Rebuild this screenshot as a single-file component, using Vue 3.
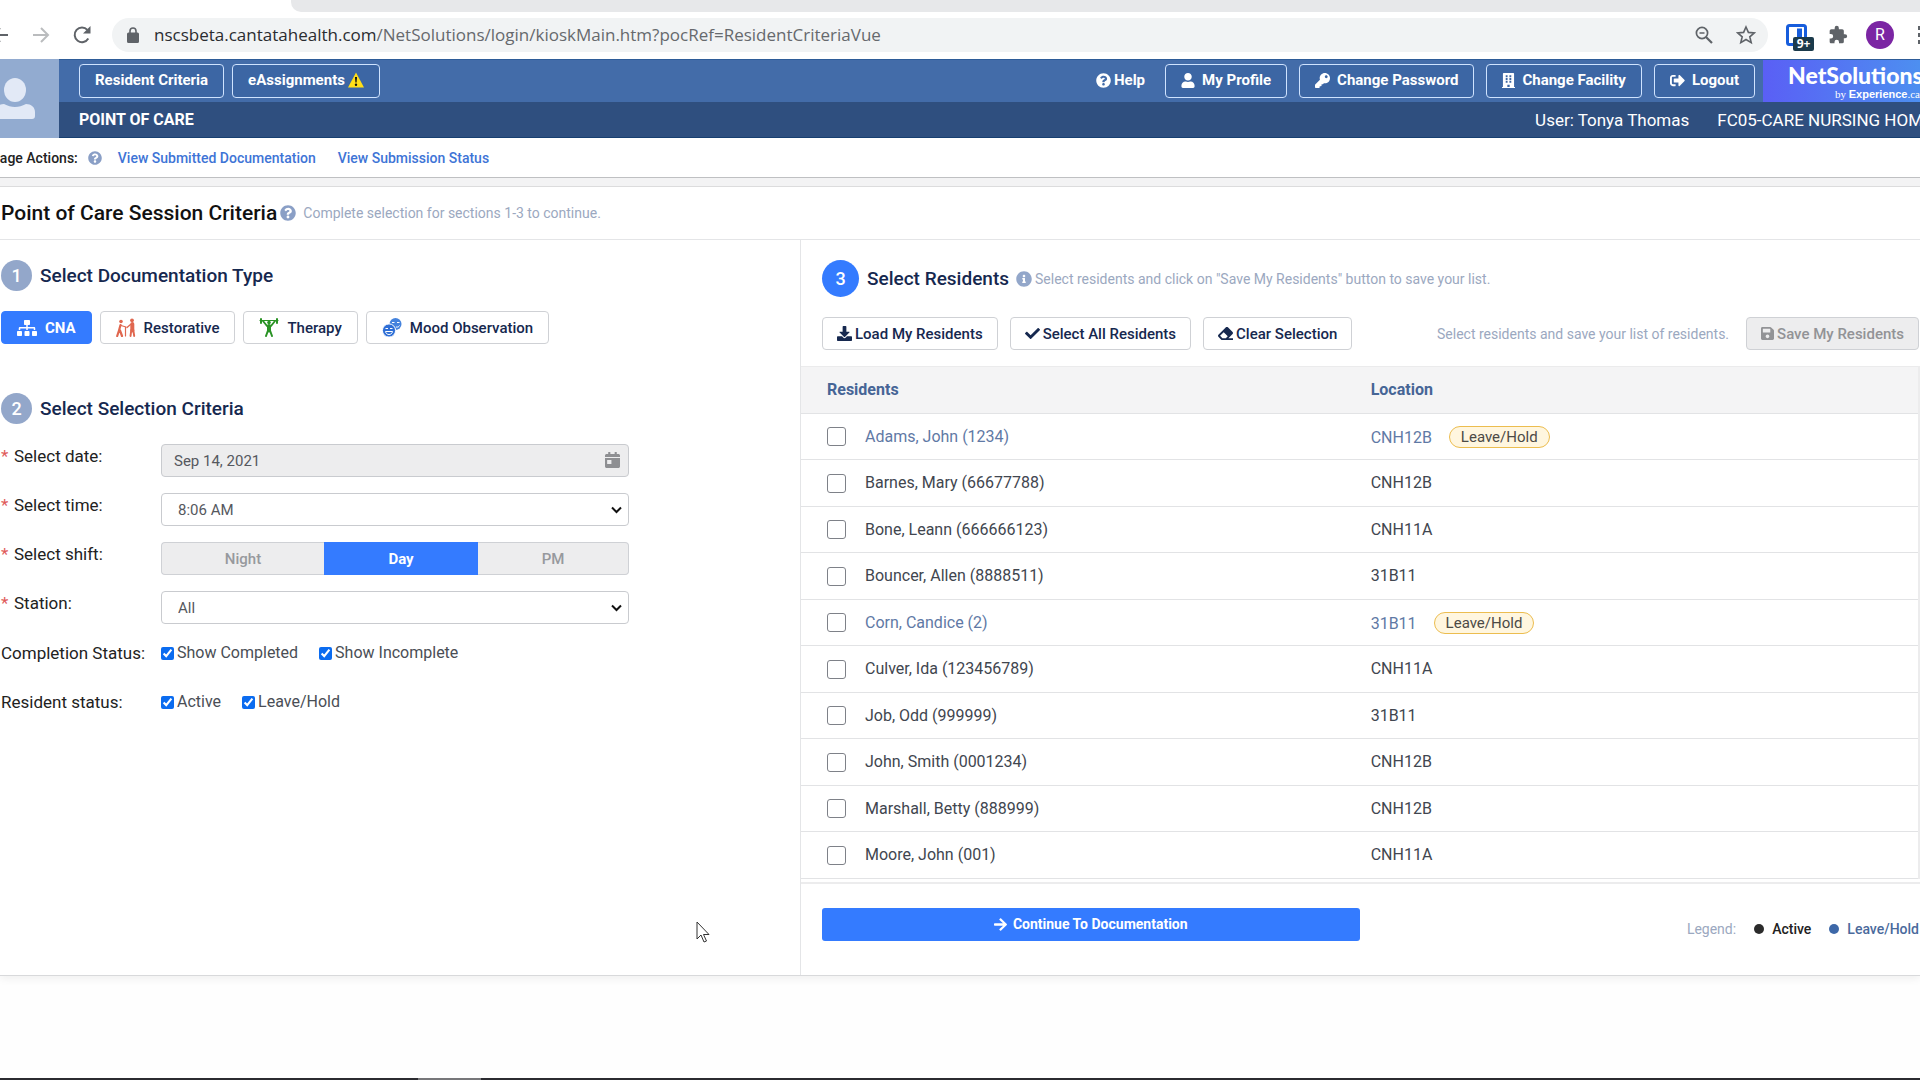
<script setup>
import { ref } from 'vue'

const icons = {
  question: ['0 0 512 512', 'M504 256c0 136.997-111.043 248-248 248S8 392.997 8 256C8 119.083 119.043 8 256 8s248 111.083 248 248zM262.655 90c-54.497 0-89.255 22.957-116.549 63.758-3.536 5.286-2.353 12.415 2.715 16.258l34.699 26.31c5.205 3.947 12.621 3.008 16.665-2.122 17.864-22.658 30.113-35.797 57.303-35.797 20.429 0 45.698 13.148 45.698 32.958 0 14.976-12.363 22.667-32.534 33.976C247.128 238.528 216 254.941 216 296v4c0 6.627 5.373 12 12 12h56c6.627 0 12-5.373 12-12v-1.333c0-28.462 83.186-29.647 83.186-106.667 0-58.002-60.165-102-116.531-102zM256 338c-25.365 0-46 20.635-46 46 0 25.364 20.635 46 46 46s46-20.636 46-46c0-25.365-20.635-46-46-46z'],
  info: ['0 0 512 512', 'M256 8C119.043 8 8 119.083 8 256c0 136.997 111.043 248 248 248s248-111.003 248-248C504 119.083 392.957 8 256 8zm0 110c23.196 0 42 18.804 42 42s-18.804 42-42 42-42-18.804-42-42 18.804-42 42-42zm56 254c0 6.627-5.373 12-12 12h-88c-6.627 0-12-5.373-12-12v-24c0-6.627 5.373-12 12-12h12v-64h-12c-6.627 0-12-5.373-12-12v-24c0-6.627 5.373-12 12-12h64c6.627 0 12 5.373 12 12v100h12c6.627 0 12 5.373 12 12v24z'],
  user: ['0 0 448 512', 'M224 256c70.7 0 128-57.3 128-128S294.7 0 224 0 96 57.3 96 128s57.3 128 128 128zm89.6 32h-16.7c-22.2 10.2-46.9 16-72.9 16s-50.6-5.8-72.9-16h-16.7C60.2 288 0 348.2 0 422.4V464c0 26.5 21.5 48 48 48h352c26.5 0 48-21.5 48-48v-41.6c0-74.2-60.2-134.4-134.4-134.4z'],
  key: ['0 0 512 512', 'M512 176.001C512 273.203 433.202 352 336 352c-11.22 0-22.19-1.062-32.827-3.069l-24.012 27.014A23.999 23.999 0 0 1 261.223 384H224v40c0 13.255-10.745 24-24 24h-40v40c0 13.255-10.745 24-24 24H24c-13.255 0-24-10.745-24-24v-78.059c0-6.365 2.529-12.47 7.029-16.971l161.802-161.802C163.108 213.814 160 195.271 160 176 160 78.798 238.797.001 335.999 0 433.488-.001 512 78.511 512 176.001zM336 128c0 26.51 21.49 48 48 48s48-21.49 48-48-21.49-48-48-48-48 21.49-48 48z'],
  building: ['0 0 448 512', 'M436 480h-20V24c0-13.255-10.745-24-24-24H56C42.745 0 32 10.745 32 24v456H12c-6.627 0-12 5.373-12 12v20h448v-20c0-6.627-5.373-12-12-12zM128 76h64v64h-64zM256 76h64v64h-64zM128 172h64v64h-64zM256 172h64v64h-64zM128 268h64v64h-64zM256 268h64v64h-64zM184 400h80v80h-80z'],
  logout: ['0 0 512 512', 'M497 273L329 441c-15 15-41 5-41-17v-96H152c-13 0-24-11-24-24v-96c0-13 11-24 24-24h136V88c0-21 26-32 41-17l168 168c9 9 9 25 0 34zM192 436v-40c0-7-5-12-12-12H96c-18 0-32-14-32-32V160c0-18 14-32 32-32h84c7 0 12-5 12-12V76c0-7-5-12-12-12H96c-53 0-96 43-96 96v192c0 53 43 96 96 96h84c7 0 12-5 12-12z'],
  sitemap: ['0 0 640 512', 'M128 352H32c-18 0-32 14-32 32v96c0 18 14 32 32 32h96c18 0 32-14 32-32v-96c0-18-14-32-32-32zm-24-80h192v48h48v-48h192v48h48v-57c0-21-17-39-39-39H344v-64h40c18 0 32-14 32-32V32c0-18-14-32-32-32H256c-18 0-32 14-32 32v96c0 18 14 32 32 32h40v64H95c-22 0-39 18-39 39v57h48v-48zm264 80h-96c-18 0-32 14-32 32v96c0 18 14 32 32 32h96c18 0 32-14 32-32v-96c0-18-14-32-32-32zm240 0h-96c-18 0-32 14-32 32v96c0 18 14 32 32 32h96c18 0 32-14 32-32v-96c0-18-14-32-32-32z'],
  download: ['0 0 512 512', 'M216 0h80c13 0 24 11 24 24v168h88c18 0 27 21 14 34L270 378c-7 7-20 7-27 0L91 226c-13-13-4-34 14-34h87V24c0-13 11-24 24-24zm296 376v112c0 13-11 24-24 24H24c-13 0-24-11-24-24V376c0-13 11-24 24-24h147l49 49c20 20 52 20 72 0l49-49h147c13 0 24 11 24 24z'],
  check: ['0 0 512 512', 'M173.898 439.404l-166.4-166.4c-9.997-9.997-9.997-26.206 0-36.204l36.203-36.204c9.997-9.998 26.207-9.998 36.204 0L192 312.69 432.095 72.596c9.997-9.997 26.207-9.997 36.204 0l36.203 36.204c9.997 9.997 9.997 26.206 0 36.204l-294.4 294.401c-9.998 9.997-26.207 9.997-36.204-.001z'],
  eraser: ['0 0 512 512', 'M497.941 273.941c18.745-18.745 18.745-49.137 0-67.882l-160-160c-18.745-18.745-49.136-18.746-67.883 0l-256 256c-18.745 18.745-18.745 49.137 0 67.882l96 96A48.004 48.004 0 0 0 144 480h356c6.627 0 12-5.373 12-12v-40c0-6.627-5.373-12-12-12H355.883l142.058-142.059zm-302.627-62.627l137.373 137.373L265.373 416H150.628l-80-80 124.686-124.686z'],
  save: ['0 0 448 512', 'M433.941 129.941l-83.882-83.882A48 48 0 0 0 316.118 32H48C21.49 32 0 53.49 0 80v352c0 26.51 21.49 48 48 48h352c26.51 0 48-21.49 48-48V163.882a48 48 0 0 0-14.059-33.941zM224 416c-35.346 0-64-28.654-64-64 0-35.346 28.654-64 64-64s64 28.654 64 64c0 35.346-28.654 64-64 64zm96-304.52V212c0 6.627-5.373 12-12 12H76c-6.627 0-12-5.373-12-12V108c0-6.627 5.373-12 12-12h228.52c3.183 0 6.235 1.264 8.485 3.515l3.48 3.48A11.996 11.996 0 0 1 320 111.48z'],
  arrow: ['0 0 448 512', 'M190 101l22-22c10-10 25-10 34 0l195 194c9 9 9 25 0 34L246 501c-9 9-24 9-34 0l-22-22c-10-10-9-25 0-35l121-114H24c-13 0-24-11-24-24v-32c0-13 11-24 24-24h287L190 136c-10-10-10-25 0-35z'],
  calendar: ['0 0 448 512', 'M0 192h448v272c0 26-22 48-48 48H48c-26 0-48-22-48-48V192zm64 74v108c0 6 4 10 10 10h108c6 0 10-4 10-10V266c0-6-4-10-10-10H74c-6 0-10 4-10 10zM400 64h-48V12c0-7-5-12-12-12h-40c-7 0-12 5-12 12v52H160V12c0-7-5-12-12-12h-40c-7 0-12 5-12 12v52H48C22 64 0 86 0 112v48h448v-48c0-26-22-48-48-48z'],
}

const residents = [
  { name: 'Adams, John (1234)', location: 'CNH12B', leave: true },
  { name: 'Barnes, Mary (66677788)', location: 'CNH12B' },
  { name: 'Bone, Leann (666666123)', location: 'CNH11A' },
  { name: 'Bouncer, Allen (8888511)', location: '31B11' },
  { name: 'Corn, Candice (2)', location: '31B11', leave: true },
  { name: 'Culver, Ida (123456789)', location: 'CNH11A' },
  { name: 'Job, Odd (999999)', location: '31B11' },
  { name: 'John, Smith (0001234)', location: 'CNH12B' },
  { name: 'Marshall, Betty (888999)', location: 'CNH12B' },
  { name: 'Moore, John (001)', location: 'CNH11A' },
]

const selected = ref([])
const shift = ref('Day')
const shifts = ['Night', 'Day', 'PM']
const showCompleted = ref(true)
const showIncomplete = ref(true)
const showActive = ref(true)
const showLeave = ref(true)
</script>

<template>
  <div class="window">
    <header class="browser">
      <div class="tabstrip"></div>
      <div class="toolbar">
        <button class="tool back" aria-label="Back">
          <svg width="18" height="18" viewBox="0 0 18 18" fill="none" stroke="#5f6368" stroke-width="2"><path d="M17 9H2M9 2L2 9l7 7" /></svg>
        </button>
        <button class="tool forward" aria-label="Forward">
          <svg width="18" height="18" viewBox="0 0 18 18" fill="none" stroke="#babcbe" stroke-width="2"><path d="M1 9h15M9 2l7 7-7 7" /></svg>
        </button>
        <button class="tool reload" aria-label="Reload">
          <svg width="20" height="20" viewBox="0 0 20 20"><path d="M16.3 13.5A7.3 7.3 0 1 1 15.400 4.900" fill="none" stroke="#5f6368" stroke-width="2" /><path d="M18.500 1v7.500H11z" fill="#5f6368" /></svg>
        </button>
        <div class="address">
          <svg width="12" height="16" viewBox="0 0 12 16"><path d="M1.500 5.500h9A1.500 1.500 0 0 1 12 7v7.500a1.500 1.500 0 0 1-1.500 1.500h-9A1.500 1.500 0 0 1 0 14.500V7a1.500 1.500 0 0 1 1.500-1.500z" fill="#5f6368" /><path d="M3 6V4a3 3 0 0 1 6 0v2" fill="none" stroke="#5f6368" stroke-width="1.600" /></svg>
          <span class="url">nscsbeta.cantatahealth.com<span class="path">/NetSolutions/login/kioskMain.htm?pocRef=ResidentCriteriaVue</span></span>
          <svg width="18" height="18" viewBox="0 0 18 18" fill="none" stroke="#5f6368"><circle cx="7" cy="7" r="5.600" stroke-width="1.700" /><path d="M11 11l6 6" stroke-width="2.200" /><path d="M4.500 7h5" stroke-width="1.500" /></svg>
          <svg class="star" width="20" height="20" viewBox="0 0 20 20" fill="none" stroke="#5f6368" stroke-width="1.600"><path d="M10 2l2.400 5.400 5.900.5-4.500 3.900 1.400 5.800-5.200-3.100-5.200 3.100 1.400-5.800L1.700 7.900l5.900-.5z" /></svg>
        </div>
        <div class="extensions">
          <div class="bitwarden">
            <svg width="22" height="22" viewBox="0 0 22 22"><rect x="1.500" y="1.500" width="18" height="19" rx="2" fill="#fff" stroke="#175ddc" stroke-width="3" /><path d="M11 4.500h5V13l-5 3z" fill="#175ddc" /></svg>
            <span class="count">9+</span>
          </div>
          <svg width="20" height="20" viewBox="0 0 24 24" fill="#5f6368"><path d="M20.500 11H19V7a2 2 0 0 0-2-2h-4V3.500a2.500 2.500 0 0 0-5 0V5H4a2 2 0 0 0-2 2v3.800h1.500a2.700 2.700 0 0 1 0 5.400H2V20c0 1.100.9 2 2 2h3.800v-1.500a2.700 2.700 0 0 1 5.400 0V22H17a2 2 0 0 0 2-2v-4h1.500a2.500 2.500 0 0 0 0-5z" /></svg>
          <span class="profile">R</span>
          <svg width="4" height="20" viewBox="0 0 4 20" fill="#5f6368"><rect y="1" width="4" height="4" /><rect y="8" width="4" height="4" /><rect y="15" width="4" height="4" /></svg>
        </div>
      </div>
    </header>

    <div class="masthead">
      <div class="avatar">
        <svg width="40" height="42" viewBox="0 0 40 42" fill="#e2e9f6"><ellipse cx="20" cy="12" rx="11" ry="12" /><path d="M0 40V34c0-5 4-8 9-8 4 2 7 3 11 3s7-1 11-3c5 0 9 3 9 8v4a3 3 0 0 1-3 3H2z" /></svg>
      </div>
      <div class="bars">
        <nav class="topbar">
          <button class="navbtn">Resident Criteria</button>
          <button class="navbtn">eAssignments
            <svg width="16" height="16" viewBox="0 0 16 16"><path d="M8 0.500L16 15.500H0z" fill="#ffde17" /><path d="M7 5h2l-.4 5.500H7.400z" fill="#111" /><circle cx="8" cy="12.800" r="1.200" fill="#111" /></svg>
          </button>
          <a class="help" href="#"><svg width="15" height="15" :viewBox="icons.question[0]"><path :d="icons.question[1]" /></svg>Help</a>
          <button class="navbtn wide"><svg width="14" height="15" :viewBox="icons.user[0]"><path :d="icons.user[1]" /></svg>My Profile</button>
          <button class="navbtn wide"><svg width="15" height="15" :viewBox="icons.key[0]"><path :d="icons.key[1]" /></svg>Change Password</button>
          <button class="navbtn wide"><svg width="13" height="15" :viewBox="icons.building[0]"><path fill-rule="evenodd" :d="icons.building[1]" /></svg>Change Facility</button>
          <button class="navbtn wide"><svg width="15" height="15" :viewBox="icons.logout[0]"><path :d="icons.logout[1]" /></svg>Logout</button>
          <div class="brand">
            <span class="product">NetSolutions</span>
            <span class="maker">by <b>Experience</b>.care</span>
          </div>
        </nav>
        <div class="subbar">
          <h1>POINT OF CARE</h1>
          <span>User: Tonya Thomas</span>
          <span class="facility">FC05-CARE NURSING HOM</span>
        </div>
      </div>
    </div>

    <div class="actions">
      <span>Page Actions:</span>
      <svg width="14" height="14" :viewBox="icons.question[0]"><path :d="icons.question[1]" /></svg>
      <a href="#">View Submitted Documentation</a>
      <a href="#">View Submission Status</a>
    </div>

    <main class="card">
      <div class="cardhead">
        <h2>Point of Care Session Criteria</h2>
        <svg width="16" height="16" :viewBox="icons.question[0]"><path :d="icons.question[1]" /></svg>
        <span class="hint">Complete selection for sections 1-3 to continue.</span>
      </div>

      <div class="columns">
        <section class="criteria">
          <div class="step"><span class="num">1</span><h3>Select Documentation Type</h3></div>
          <div class="types">
            <button class="type on"><svg width="20" height="16" :viewBox="icons.sitemap[0]"><path :d="icons.sitemap[1]" /></svg>CNA</button>
            <button class="type">
              <svg width="20" height="19" viewBox="0 0 20 19" fill="none" stroke="#e0674f" stroke-linecap="round"><circle cx="5" cy="3.500" r="1.800" fill="#e0674f" stroke="none" /><path d="M4.500 7L3 12.500M3 12.500L1.200 18M4 12.500l2 5.500" stroke-width="2.200" /><path d="M5 7.500l5 1.500M9.500 9v9" stroke-width="1.200" /><circle cx="16" cy="2.300" r="1.900" fill="#e0674f" stroke="none" /><path d="M16.300 6v6.500" stroke-width="4" /><path d="M15.300 12l-.8 6M17.300 12l.9 6" stroke-width="1.900" /><path d="M14.500 6.500L11 9.500" stroke-width="1.300" /></svg>
              Restorative
            </button>
            <button class="type">
              <svg width="20" height="19" viewBox="0 0 20 19" fill="none" stroke="#2a9325" stroke-linecap="round"><path d="M1 2.500h18" stroke-width="1.200" /><path d="M2 1v4M18 1v4" stroke-width="2" /><circle cx="10" cy="4.500" r="1.800" fill="#2a9325" stroke="none" /><path d="M4 3l4 5M16 3l-4 5" stroke-width="1.900" /><path d="M10 8v4.500" stroke-width="4" /><path d="M9 12.500l-2 5.500M11 12.500l2 5.500" stroke-width="2" /></svg>
              Therapy
            </button>
            <button class="type">
              <svg width="20" height="19" viewBox="0 0 20 19" fill="none" stroke="#fff" stroke-width="1"><circle cx="13.500" cy="6" r="6" fill="#4583dd" stroke="none" /><path d="M10 4.500h2.500M15 4.500h2.500M14 9c2 .5 3-.5 3.500-1.500" /><circle cx="7" cy="12.500" r="6.600" fill="#2f6fd6" /><path d="M3.500 10.500H6M8 10.500h2.500M3.500 13.500h7c-.5 4-6.500 4-7 0z" /></svg>
              Mood Observation
            </button>
          </div>

          <div class="step"><span class="num">2</span><h3>Select Selection Criteria</h3></div>
          <form class="form" @submit.prevent>
            <div class="row">
              <label class="req" for="date">Select date:</label>
              <div class="datebox">
                <input id="date" class="control" type="text" value="Sep 14, 2021" disabled />
                <svg width="15" height="16" :viewBox="icons.calendar[0]" preserveAspectRatio="none"><path fill-rule="evenodd" :d="icons.calendar[1]" /></svg>
              </div>
            </div>
            <div class="row">
              <label class="req" for="time">Select time:</label>
              <div class="selectbox">
                <select id="time" class="control"><option>8:06 AM</option></select>
                <svg width="11" height="8" viewBox="0 0 11 8"><path d="M1 1.500l4.500 4.500L10 1.500" /></svg>
              </div>
            </div>
            <div class="row">
              <span id="shift" class="req">Select shift:</span>
              <div class="shifts" role="group" aria-labelledby="shift">
                <button v-for="s in shifts" :key="s" type="button" :class="{ on: shift === s }" @click="shift = s">{{ s }}</button>
              </div>
            </div>
            <div class="row">
              <label class="req" for="station">Station:</label>
              <div class="selectbox">
                <select id="station" class="control"><option>All</option></select>
                <svg width="11" height="8" viewBox="0 0 11 8"><path d="M1 1.500l4.500 4.500L10 1.500" /></svg>
              </div>
            </div>
            <div class="row">
              <span class="name">Completion Status:</span>
              <div class="checks">
                <label><input v-model="showCompleted" type="checkbox" />Show Completed</label>
                <label><input v-model="showIncomplete" type="checkbox" />Show Incomplete</label>
              </div>
            </div>
            <div class="row">
              <span class="name">Resident status:</span>
              <div class="checks">
                <label><input v-model="showActive" type="checkbox" />Active</label>
                <label><input v-model="showLeave" type="checkbox" />Leave/Hold</label>
              </div>
            </div>
          </form>
        </section>

        <section class="residents">
          <div class="step big">
            <span class="num on">3</span>
            <h3>Select Residents</h3>
            <svg width="16" height="16" :viewBox="icons.info[0]"><path :d="icons.info[1]" /></svg>
            <span class="hint">Select residents and click on "Save My Residents" button to save your list.</span>
          </div>
          <div class="tools">
            <button class="btn"><svg width="15" height="15" :viewBox="icons.download[0]"><path :d="icons.download[1]" /></svg>Load My Residents</button>
            <button class="btn"><svg width="15" height="15" :viewBox="icons.check[0]"><path :d="icons.check[1]" /></svg>Select All Residents</button>
            <button class="btn"><svg width="15" height="15" :viewBox="icons.eraser[0]"><path :d="icons.eraser[1]" /></svg>Clear Selection</button>
            <span class="hint">Select residents and save your list of residents.</span>
            <button class="btn" disabled><svg width="13" height="15" :viewBox="icons.save[0]"><path :d="icons.save[1]" /></svg>Save My Residents</button>
          </div>
          <div class="tablewrap">
            <table>
              <thead>
                <tr><th class="who" scope="col">Residents</th><th scope="col">Location</th></tr>
              </thead>
              <tbody>
                <tr v-for="(r, i) in residents" :key="r.name" :class="{ leave: r.leave }">
                  <td class="who">
                    <label :for="'r' + i"><input :id="'r' + i" v-model="selected" type="checkbox" :value="r.name" />{{ r.name }}</label>
                  </td>
                  <td>{{ r.location }}<span v-if="r.leave" class="tag">Leave/Hold</span></td>
                </tr>
              </tbody>
            </table>
          </div>
          <footer class="foot">
            <button class="continue"><svg width="13" height="15" :viewBox="icons.arrow[0]"><path transform="translate(0 -34)" :d="icons.arrow[1]" /></svg>Continue To Documentation</button>
            <div class="legend">
              <span class="label">Legend:</span>
              <span class="dot"></span><span class="active">Active</span>
              <span class="dot blue"></span><span class="held">Leave/Hold</span>
            </div>
          </footer>
        </section>
      </div>
    </main>

    <div class="taskbar"><span></span></div>
    <svg class="cursor" width="14" height="22" viewBox="0 0 14 22"><path d="M1 1v17l4-4 3 7 2.500-1-3-6.500H13z" fill="#fff" stroke="#333" /></svg>
  </div>
</template>

<style>
body {
  margin: 0;
  overflow: hidden;
  background: #fefefe;
}
</style>

<style scoped>
.window {
  position: relative;
  display: flex;
  flex-direction: column;
  min-height: 100vh;
  overflow: hidden;
  font-family: Roboto, "Liberation Sans", sans-serif;
  font-size: 16px;
  line-height: 20px;
  color: #333a45;
}
* { box-sizing: border-box; }
button, input, select { font: inherit; color: inherit; margin: 0; }
button { cursor: pointer; white-space: nowrap; }
h1, h2, h3 { margin: 0; font-weight: 500; }
a { text-decoration: none; }
svg { flex: none; display: block; }

.browser { background: #fff; }
.tabstrip {
  height: 12px;
  margin-left: 291px;
  background: #e7e8ea;
  border-bottom-left-radius: 10px;
}
.toolbar {
  display: flex;
  align-items: center;
  height: 47px;
  padding-bottom: 1px;
}
.tool { display: block; padding: 0; border: 0; background: none; }
.back { margin-left: -9px; }
.forward { margin-left: 23px; }
.reload { margin: 0 20px 0 22px; }
.address {
  flex: 1;
  display: flex;
  align-items: center;
  height: 34px;
  padding: 0 12px 0 15px;
  border-radius: 17px;
  background: #f1f3f4;
}
.url {
  flex: 1;
  margin-left: 15px;
  font-family: "Open Sans", "Noto Sans", sans-serif;
  font-size: 17px;
  line-height: 24px;
  color: #2a2c30;
}
.path { color: #66696d; }
.star { margin-left: 23px; }
.extensions {
  display: flex;
  align-items: center;
  gap: 18px;
  margin: 0 -2px 0 18px;
}
.bitwarden { position: relative; margin-right: 2px; }
.count {
  position: absolute;
  left: 7px;
  top: 13px;
  width: 21px;
  border-radius: 2px;
  background: #1b3a4b;
  font: 700 12px/14px "Open Sans", sans-serif;
  color: #fff;
  text-align: center;
}
.profile {
  width: 28px;
  height: 28px;
  border-radius: 50%;
  background: #7b25a3;
  color: #fff;
  line-height: 28px;
  text-align: center;
}
.extensions > :last-child { margin-left: 6px; }

.masthead { display: flex; height: 79px; }
.avatar {
  display: flex;
  align-items: center;
  width: 59px;
  background: #92abd0;
}
.avatar svg { margin-left: -5px; }
.bars { flex: 1; min-width: 0; display: flex; flex-direction: column; }
.topbar {
  display: flex;
  align-items: center;
  height: 43px;
  padding-left: 20px;
  background: #436ca9;
  border-top: 1px solid #2e5c98;
}
.navbtn {
  display: flex;
  align-items: center;
  gap: 3px;
  height: 34px;
  margin-right: 8px;
  padding: 0 15px 2px;
  border: 1px solid #cfe3ff;
  border-radius: 4px;
  background: #3c66a4;
  color: #fff;
  font-size: 15px;
  font-weight: 700;
}
.navbtn.wide { gap: 7px; margin-right: 12px; fill: #fff; }
.help {
  display: flex;
  align-items: center;
  gap: 3px;
  margin: 0 20px 2px auto;
  fill: #fff;
  color: #fff;
  font-size: 15px;
  font-weight: 700;
}
.brand {
  width: 157px;
  height: 42px;
  margin-left: -4px;
  padding: 2px 0 0 25px;
  overflow: hidden;
  background: linear-gradient(90deg, #5a5ff5, #4d8ff0);
  color: #fff;
  white-space: nowrap;
}
.product {
  display: block;
  font: 900 23px/26px Lato, sans-serif;
}
.maker {
  display: block;
  padding-left: 47px;
  font: 11px/12px "Liberation Serif", serif;
}
.maker b { font-family: "Liberation Sans", sans-serif; line-height: 11px; }
.subbar {
  display: flex;
  align-items: center;
  flex: 1;
  padding-left: 20px;
  background: #2f4f7f;
  border-bottom: 1px solid #173f70;
  color: #fff;
  font-size: 17px;
  white-space: nowrap;
}
.subbar h1 { flex: 1; font-size: 16px; line-height: 20px; font-weight: 700; }
.facility { margin: 0 -3px 0 28px; }

.actions {
  display: flex;
  align-items: center;
  height: 40px;
  margin-left: -9px;
  border-bottom: 1px solid #bfc0c2;
  background: #fff;
  font-size: 14px;
  font-weight: 500;
  color: #222;
}
.actions svg { margin: 0 0 0 10px; fill: #8a9fc6; }
.actions a { margin-left: 16px; color: #3e74d6; }
.actions a + a { margin-left: 22px; }

.card {
  margin-top: 8px;
  border-top: 1px solid #dcdcdd;
  border-bottom: 1px solid #d8d9db;
  background: #fff;
  box-shadow: 0 -8px 0 #f3f3f4, 0 3px 8px rgba(0, 0, 0, 0.06);
}
.cardhead {
  display: flex;
  align-items: center;
  height: 53px;
  padding-left: 1px;
  border-bottom: 1px solid #e4e5e7;
}
.cardhead h2 { font-size: 21px; line-height: 24px; color: #111; }
.cardhead svg { margin: 0 7px 0 3px; fill: #8a9fc6; }
.hint { font-size: 14px; color: #9ba8c0; }

.columns { display: grid; grid-template-columns: 5fr 7fr; }
.criteria { padding: 20px 0 0 1px; }
.step { display: flex; align-items: center; height: 31px; }
.step h3 { margin-left: 8px; font-size: 19px; line-height: 24px; color: #16284f; }
.num {
  width: 31px;
  height: 31px;
  border-radius: 50%;
  background: #93a7ca;
  color: #fff;
  font-size: 18px;
  font-weight: 500;
  line-height: 31px;
  text-align: center;
}
.num.on { width: 37px; height: 37px; line-height: 37px; background: #347bff; }
.types { display: flex; gap: 8px; margin: 20px 0 49px; }
.type {
  display: flex;
  align-items: center;
  gap: 8px;
  height: 33px;
  padding: 0 15px;
  border: 1px solid #cfd1d5;
  border-radius: 4px;
  background: #fff;
  color: #16284f;
  font-size: 15px;
  font-weight: 500;
}
.type.on { border-color: #347bff; background: #347bff; color: #fff; fill: #fff; font-weight: 700; }

.form { margin: 20px 171px 0 0; }
.row { display: grid; grid-template-columns: 160px 1fr; height: 33px; margin-bottom: 16px; color: #222; }
.req, .name { padding-top: 2px; font-size: 17px; white-space: nowrap; }
.name { padding-top: 3px; }
.req::before { content: "*"; display: inline-block; width: 13px; color: #e05a5a; }
.control {
  display: block;
  width: 100%;
  height: 33px;
  padding: 0 12px;
  border: 1px solid #c9cbcf;
  border-radius: 4px;
  background: #fff;
  color: #55585e;
  font-size: 15px;
  appearance: none;
}
select.control { padding: 0 16px; }
.control:disabled { background: #ededee; opacity: 1; }
.datebox, .selectbox { position: relative; }
.datebox svg { position: absolute; right: 9px; top: 8px; fill: #8e8f92; }
.selectbox svg { position: absolute; right: 7px; top: 13px; fill: none; stroke: #111; stroke-width: 2; }
.shifts { display: grid; grid-template-columns: 163px 154px 1fr; }
.shifts button {
  height: 33px;
  padding: 0;
  border: 1px solid #cfd1d5;
  border-width: 1px 0;
  background: #ededee;
  color: #97999d;
  font-size: 15px;
  font-weight: 500;
}
.shifts button:first-child { border-left-width: 1px; border-radius: 4px 0 0 4px; }
.shifts button:last-child { border-right-width: 1px; border-radius: 0 4px 4px 0; }
.shifts button.on { border-color: #347bff; background: #347bff; color: #fff; font-weight: 700; }
.checks { display: flex; gap: 21px; padding-top: 3px; height: 23px; color: #4a4e55; white-space: nowrap; }
.checks label { display: flex; align-items: center; gap: 3px; }
.checks input { width: 13px; height: 13px; accent-color: #0b6cf0; }

.residents { border-left: 1px solid #e4e5e7; }
.step.big { height: 37px; margin: 20px 0 0 21px; }
.step svg { margin: 0 3px 0 7px; fill: #93a7ca; }
.tools { display: flex; align-items: center; gap: 12px; padding: 20px 1px 16px 21px; }
.btn {
  display: flex;
  align-items: center;
  gap: 3px;
  height: 33px;
  padding: 0 14px;
  border: 1px solid #cfd1d5;
  border-radius: 4px;
  background: #fff;
  color: #16284f;
  fill: #16284f;
  font-size: 15px;
  font-weight: 500;
}
.btn:disabled { background: #ededee; color: #929396; fill: #929396; }
.tools .hint { margin: 0 5px 0 auto; }
.tablewrap { border-right: 2px solid #ececed; }
table { width: 100%; table-layout: fixed; border-collapse: separate; border-spacing: 0; }
th, td { padding: 0; text-align: left; border-bottom: 1px solid #e2e3e5; }
th {
  height: 48px;
  border-top: 1px solid #ebebec;
  background: #f4f4f5;
  color: #466596;
  font-weight: 700;
}
.who { width: 51%; padding-left: 26px; }
td { height: 46px; color: #41464f; }
tr:nth-child(even) td { height: 47px; }
td label { display: flex; align-items: center; gap: 19px; }
td input {
  appearance: none;
  width: 19px;
  height: 19px;
  border: 1px solid #7e8188;
  border-radius: 3px;
  background: #fff;
}
td input:checked { background: #347bff; }
.leave td { color: #5f79a5; }
.tag {
  display: inline-block;
  margin-left: 17px;
  padding: 0 11px;
  border: 1px solid #ecbd4f;
  border-radius: 11px;
  background: #fff6df;
  color: #4c4a46;
  font-size: 15px;
  line-height: 20px;
  vertical-align: 1px;
}
.foot {
  display: flex;
  align-items: center;
  justify-content: space-between;
  height: 93px;
  margin-top: 3px;
  padding: 0 1px 11px 21px;
  border-top: 2px solid #ececed;
}
.continue {
  display: flex;
  align-items: center;
  justify-content: center;
  gap: 6px;
  width: 49%;
  height: 33px;
  border: 0;
  border-radius: 3px;
  background: #347bff;
  color: #fff;
  fill: #fff;
  font-size: 14px;
  font-weight: 700;
}
.legend { display: flex; align-items: center; padding-top: 9px; font-size: 14px; font-weight: 500; }
.label { margin-right: 18px; color: #9ba8c0; font-weight: 400; }
.dot { width: 10px; height: 10px; margin-right: 8px; border-radius: 50%; background: #2b2b2b; }
.dot.blue { margin-left: 18px; background: #3d68a8; }
.active { color: #222; }
.held { color: #4a6a9c; }

.taskbar { height: 2px; margin-top: auto; background: #2b2b30; }
.taskbar span { display: block; width: 63px; height: 2px; margin-left: 418px; background: #77777a; }
.cursor { position: absolute; left: 696px; top: 921px; }
</style>
